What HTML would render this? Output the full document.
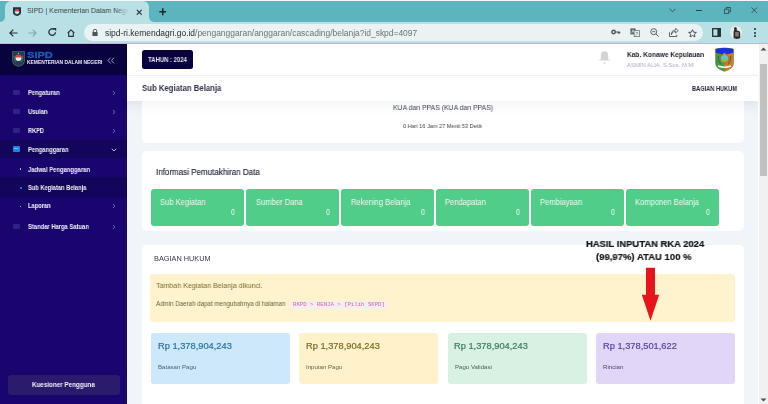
<!DOCTYPE html>
<html><head><meta charset="utf-8">
<style>
*{margin:0;padding:0;box-sizing:border-box}
html,body{width:768px;height:404px;overflow:hidden;background:#fff;font-family:"Liberation Sans",sans-serif}
.a{position:absolute}
.t{position:absolute;white-space:nowrap;line-height:1;transform-origin:0 0;will-change:transform}
.b{font-weight:bold}
.sb{font-weight:bold;font-size:6.56px;color:#f2f0fa;left:27.5px}
.ch{position:absolute;left:111.5px}
.ic{position:absolute;left:13.2px;width:7px;height:5.2px;background:#2e2386;border-radius:1px;filter:blur(0.6px)}
.g{position:absolute;top:189.3px;width:92.8px;height:36.4px;background:#50cd89;border-radius:3px}
.gl{font-size:8.38px;color:#effaf4;top:197.7px;transform:scaleX(0.905)}
.gz{font-size:8.4px;color:#effaf4;top:208.3px;transform:scaleX(0.85)}
.vc{position:absolute;top:333px;height:51.2px;border-radius:3px}
.rp{font-size:8.8px;top:342.1px;transform:scaleX(1.055);-webkit-text-stroke:0.2px currentColor}
.lb{font-size:6.1px;top:364.1px}
</style></head>
<body>
<!-- ============ BROWSER CHROME ============ -->
<div class="a" style="left:0;top:0;width:768px;height:1px;background:#f4f8f8"></div>
<div class="a" style="left:0;top:1px;width:768px;height:21px;background:#5cb5be"></div>
<!-- active tab -->
<div class="a" style="left:5px;top:1px;width:144px;height:22px;background:#b9e0e4;border-radius:6px 6px 0 0"></div>
<div class="a" style="left:0;top:14px;width:5px;height:8px;background:#b9e0e4"></div>
<div class="a" style="left:0;top:13px;width:5px;height:9px;background:#5cb5be;border-radius:0 0 5px 0"></div>
<div class="a" style="left:149px;top:14px;width:6px;height:8px;background:#b9e0e4"></div>
<div class="a" style="left:149px;top:13px;width:6px;height:9px;background:#5cb5be;border-radius:0 0 0 5px"></div>
<!-- tab icon -->
<svg class="a" style="left:13px;top:7px" width="8" height="9" viewBox="0 0 8 9">
 <path d="M0 0.3 H8 V5.5 Q8 8 4 9 Q0 8 0 5.5 Z" fill="#1a2f52"/>
 <circle cx="4" cy="4.6" r="2.3" fill="#f2efe6"/>
 <path d="M1.7 4.4 A2.3 2.3 0 0 1 6.3 4.4 Z" fill="#e43a2a"/>
 <path d="M1.5 6.6 Q4 8 6.5 6.6" stroke="#3a9a40" stroke-width="0.6" fill="none"/>
</svg>
<div class="t" style="left:27px;top:7.3px;font-size:8.1px;color:#33403f;width:118px;overflow:hidden;transform:scaleX(0.868);-webkit-mask-image:linear-gradient(90deg,#000 86%,transparent 99%)">SIPD <span style="color:#2a5fb0">|</span> Kementerian Dalam Negeri</div>
<svg class="a" style="left:136.3px;top:8.5px" width="6.5" height="6.5" viewBox="0 0 6.5 6.5"><path d="M0.8 0.8 L5.7 5.7 M5.7 0.8 L0.8 5.7" stroke="#243034" stroke-width="1.1"/></svg>
<svg class="a" style="left:158.5px;top:8px" width="7.5" height="7.5" viewBox="0 0 7.5 7.5"><path d="M3.75 0.3 V7.2 M0.3 3.75 H7.2" stroke="#1c282c" stroke-width="1.5"/></svg>
<!-- window controls -->
<svg class="a" style="left:669px;top:8px" width="7" height="5" viewBox="0 0 7 5"><path d="M0.6 0.8 L3.5 3.7 L6.4 0.8" stroke="#2a4448" stroke-width="0.8" fill="none"/></svg>
<div class="a" style="left:695.5px;top:9.5px;width:6.5px;height:0.8px;background:#2a4448"></div>
<svg class="a" style="left:724px;top:7px" width="7" height="7" viewBox="0 0 7 7"><path d="M0.5 2.2 H4.8 V6.5 H0.5 Z M2.2 2.2 V0.5 H6.5 V4.8 H4.8" stroke="#2a4448" stroke-width="0.8" fill="none"/></svg>
<svg class="a" style="left:751px;top:7px" width="6.5" height="6.5" viewBox="0 0 6.5 6.5"><path d="M0.5 0.5 L6 6 M6 0.5 L0.5 6" stroke="#2a4448" stroke-width="0.8"/></svg>
<!-- toolbar -->
<div class="a" style="left:0;top:22px;width:768px;height:21px;background:#b9e0e4"></div>
<div class="a" style="left:0;top:43px;width:768px;height:1px;background:#94cdd3"></div>
<!-- nav icons -->
<svg class="a" style="left:9px;top:28.5px" width="9" height="8" viewBox="0 0 9 8"><path d="M8.6 4 H1 M4.3 0.6 L0.9 4 L4.3 7.4" stroke="#263236" stroke-width="1.2" fill="none"/></svg>
<svg class="a" style="left:28px;top:28.5px" width="9" height="8" viewBox="0 0 9 8"><path d="M0.4 4 H8 M4.7 0.6 L8.1 4 L4.7 7.4" stroke="#82a6ab" stroke-width="1.1" fill="none"/></svg>
<svg class="a" style="left:47.5px;top:28.3px" width="9" height="8" viewBox="0 0 9 8"><path d="M7.5 4.3 A3.3 3.3 0 1 1 6.4 1.6" stroke="#263236" stroke-width="1.3" fill="none"/><path d="M5 0 H8.2 V3.2 Z" fill="#263236"/></svg>
<svg class="a" style="left:67.3px;top:28.5px" width="8" height="8" viewBox="0 0 8 8"><path d="M0.7 4 L4 0.9 L7.3 4 M1.7 3.2 V7.4 H6.3 V3.2" stroke="#263236" stroke-width="1.1" fill="none" stroke-linejoin="round"/></svg>
<!-- omnibox -->
<div class="a" style="left:84px;top:24px;width:619px;height:17px;background:#e9f3f4;border-radius:9px"></div>
<svg class="a" style="left:92px;top:29px" width="6" height="7" viewBox="0 0 6 7"><path d="M1.3 3 V2 A1.7 1.7 0 0 1 4.7 2 V3" stroke="#4a5558" stroke-width="0.9" fill="none"/><rect x="0.4" y="3" width="5.2" height="4" rx="0.6" fill="#4a5558"/></svg>
<div class="t" style="left:105px;top:28.6px;font-size:8.45px;color:#262e30">sipd-ri.kemendagri.go.id<span style="color:#6a7476">/penganggaran/anggaran/cascading/belanja?id_skpd=4097</span></div>
<!-- omnibox icons -->
<svg class="a" style="left:611px;top:29px" width="10" height="6" viewBox="0 0 10 6"><circle cx="2.6" cy="3" r="1.7" stroke="#4a5457" stroke-width="1.4" fill="none"/><path d="M4.4 3 H9 M7.3 3 V4.8 M8.6 3 V4.4" stroke="#4a5457" stroke-width="1.2"/></svg>
<svg class="a" style="left:630px;top:28px" width="10" height="9" viewBox="0 0 10 9"><rect x="0.4" y="0.4" width="5.2" height="6" fill="#5a6468"/><rect x="4.2" y="2.6" width="5.2" height="6" fill="#e9f3f4" stroke="#6a7478" stroke-width="0.8"/><path d="M5.6 4.6 H8.2 M6.9 3.9 V4.6 M5.9 7.6 L8 5" stroke="#6a7478" stroke-width="0.6"/><path d="M1.6 4.8 L3 1.8 L4.4 4.8 M2.2 3.8 H3.8" stroke="#e9f3f4" stroke-width="0.6" fill="none"/></svg>
<svg class="a" style="left:649.5px;top:28px" width="9" height="9" viewBox="0 0 9 9"><circle cx="3.7" cy="3.7" r="3" stroke="#4a5457" stroke-width="0.9" fill="none"/><path d="M5.9 5.9 L8.6 8.6 M2.2 3.7 H5.2" stroke="#4a5457" stroke-width="0.9"/></svg>
<svg class="a" style="left:668.5px;top:28px" width="10" height="9" viewBox="0 0 10 9"><path d="M0.5 4.3 V8.5 H7.8 V6.8" stroke="#4a5457" stroke-width="0.9" fill="none"/><path d="M2.4 6.8 Q2.6 3.3 6.6 3.3 V5 L9.3 2.6 L6.6 0.4 V2 Q2.2 2.2 2.4 6.8 Z" stroke="#4a5457" stroke-width="0.8" fill="none" stroke-linejoin="round"/></svg>
<svg class="a" style="left:688px;top:28.5px" width="9" height="9" viewBox="0 0 9 9"><path d="M4.5 0.7 L5.6 3.2 L8.4 3.4 L6.3 5.2 L7 7.9 L4.5 6.5 L2 7.9 L2.7 5.2 L0.6 3.4 L3.4 3.2 Z" stroke="#3a4448" stroke-width="0.9" fill="none" stroke-linejoin="round"/></svg>
<svg class="a" style="left:712px;top:28px" width="9" height="9" viewBox="0 0 9 9"><rect x="0.7" y="0.7" width="7.6" height="7.6" stroke="#263034" stroke-width="1.3" fill="none"/><rect x="5.4" y="0.7" width="2.9" height="7.6" fill="#263034"/></svg>
<div class="a" style="left:729.7px;top:26.2px;width:12.4px;height:12.4px;border-radius:50%;background:#e6eeec"></div>
<svg class="a" style="left:732.5px;top:26.5px" width="8" height="12" viewBox="0 0 8 12"><path d="M1 1 Q1.2 0 2.5 0.2 Q3.8 0.3 3.8 1.5 V3.4 L6 4 Q7.2 4.5 7.2 6 V10.8 Q7 11.8 4 11.9 Q1 11.8 0.6 11 V5 Q0.6 3.6 1.2 3.4 Z" fill="#2f2a28"/><rect x="2.2" y="5" width="3.6" height="4.5" fill="#7a7a78"/></svg>
<div class="a" style="left:754px;top:28px;width:2px;height:2px;background:#1f2b30;border-radius:1px"></div>
<div class="a" style="left:754px;top:31.5px;width:2px;height:2px;background:#1f2b30;border-radius:1px"></div>
<div class="a" style="left:754px;top:35px;width:2px;height:2px;background:#1f2b30;border-radius:1px"></div>

<!-- ============ SIDEBAR ============ -->
<div class="a" style="left:0;top:44px;width:127px;height:360px;background:#19056d"></div>
<div class="a" style="left:0;top:44px;width:127px;height:30.5px;background:#08033f"></div>
<!-- logo -->
<svg class="a" style="left:12px;top:50.8px" width="13" height="16" viewBox="0 0 13 16">
 <path d="M0.5 0.6 Q6.5 -0.2 12.5 0.6 V10.5 Q12.5 14 6.5 15.6 Q0.5 14 0.5 10.5 Z" fill="#1f3b5e" stroke="#6b6a40" stroke-width="0.7"/>
 <circle cx="6.5" cy="7" r="3" fill="#f3efe4"/>
 <path d="M3.5 6.6 A3 3 0 0 1 9.5 6.6 Z" fill="#e0402e"/>
 <path d="M2.2 4.5 Q1.8 9 4 11 M10.8 4.5 Q11.2 9 9 11" stroke="#3f8a50" stroke-width="0.8" fill="none"/>
 <circle cx="6.5" cy="2.4" r="0.7" fill="#d8c060"/>
</svg>
<div class="t b" style="left:26.9px;top:51px;font-size:9.08px;color:#1a5eb2;transform:scaleX(1.22);-webkit-text-stroke:0.3px #1a5eb2">SIPD</div>
<div class="t b" style="left:26.9px;top:60.8px;font-size:4.6px;color:#ececf6;transform:scaleX(1.07)">KEMENTERIAN DALAM NEGERI</div>
<svg class="a" style="left:106.5px;top:57px" width="8" height="7" viewBox="0 0 8 7"><path d="M3.6 0.6 L1 3.5 L3.6 6.4 M7 0.6 L4.4 3.5 L7 6.4" stroke="#b4b2d2" stroke-width="0.9" fill="none"/></svg>

<!-- menu rows -->
<div class="a" style="left:0;top:140.4px;width:127px;height:18px;background:#12055a"></div>
<div class="a" style="left:0;top:177px;width:127px;height:19.8px;background:#12055a"></div>

<div class="t sb" style="top:89.65px;transform:scaleX(0.881)">Pengaturan</div>
<div class="t sb" style="top:108.95px;transform:scaleX(0.89)">Usulan</div>
<div class="t sb" style="top:127.75px;transform:scaleX(0.86)">RKPD</div>
<div class="t sb" style="top:146.95px;transform:scaleX(0.893)">Penganggaran</div>
<div class="t sb" style="top:166.50px;transform:scaleX(0.896)">Jadwal Penganggaran</div>
<div class="t sb" style="top:184.60px;transform:scaleX(0.872)">Sub Kegiatan Belanja</div>
<div class="t sb" style="top:203.35px;transform:scaleX(0.877)">Laporan</div>
<div class="t sb" style="top:224.45px;transform:scaleX(0.89)">Standar Harga Satuan</div>
<!-- icons -->
<div class="ic" style="top:89.7px"></div>
<div class="ic" style="top:109px"></div>
<div class="ic" style="top:128px"></div>
<div class="a" style="left:12.8px;top:146.4px;width:7.7px;height:6px;background:#1f84e4;border-radius:1px"></div>
<div class="a" style="left:14px;top:148px;width:4px;height:0.8px;background:#7ab8f4"></div>
<div class="ic" style="top:224px"></div>
<div class="a" style="left:19.7px;top:167.9px;width:1.8px;height:1.8px;background:#d4d0ee;border-radius:50%"></div>
<div class="a" style="left:19.7px;top:186.5px;width:2px;height:2px;background:#2196f3;border-radius:50%"></div>
<div class="a" style="left:19.7px;top:205.5px;width:1.8px;height:1.8px;background:#d4d0ee;border-radius:50%"></div>
<!-- chevrons -->
<svg class="ch" style="top:89.5px" width="4" height="6" viewBox="0 0 4 6"><path d="M1 1 L2.8 3 L1 5" stroke="#8a84bc" stroke-width="0.75" fill="none"/></svg>
<svg class="ch" style="top:108.8px" width="4" height="6" viewBox="0 0 4 6"><path d="M1 1 L2.8 3 L1 5" stroke="#8a84bc" stroke-width="0.75" fill="none"/></svg>
<svg class="ch" style="top:127.6px" width="4" height="6" viewBox="0 0 4 6"><path d="M1 1 L2.8 3 L1 5" stroke="#8a84bc" stroke-width="0.75" fill="none"/></svg>
<svg class="a" style="left:110.8px;top:147.8px" width="6" height="4" viewBox="0 0 6 4"><path d="M0.7 0.7 L3 3 L5.3 0.7" stroke="#cdc9e6" stroke-width="0.9" fill="none"/></svg>
<svg class="ch" style="top:203px" width="4" height="6" viewBox="0 0 4 6"><path d="M1 1 L2.8 3 L1 5" stroke="#8a84bc" stroke-width="0.75" fill="none"/></svg>
<svg class="ch" style="top:224px" width="4" height="6" viewBox="0 0 4 6"><path d="M1 1 L2.8 3 L1 5" stroke="#8a84bc" stroke-width="0.75" fill="none"/></svg>
<!-- kuesioner -->
<div class="a" style="left:8.2px;top:375.1px;width:111.5px;height:20.4px;background:#2a1b6c;border-radius:3px"></div>
<div class="t b" style="left:32.2px;top:381.7px;font-size:6.84px;color:#f2f2fa;transform:scaleX(0.92)">Kuesioner Pengguna</div>

<!-- ============ MAIN ============ -->
<div class="a" style="left:127px;top:44px;width:631px;height:360px;background:#f1f4f8"></div>
<!-- header -->
<div class="a" style="left:127px;top:44px;width:631px;height:31.5px;background:#fff;border-bottom:1px solid #f1f2f5"></div>
<div class="a" style="left:142px;top:50px;width:51.3px;height:18.7px;background:#08033f;border-radius:2.5px"></div>
<div class="t b" style="left:148.4px;top:56.9px;font-size:6.7px;color:#e6e4ee;transform:scaleX(0.89)">TAHUN : 2024</div>
<svg class="a" style="left:596.5px;top:50.3px" width="15" height="15" viewBox="0 0 15 15"><path d="M7.5 1.2 Q3.8 1.2 3.8 5 V9.2 L1 10.6 H14 L11.2 9.2 V5 Q11.2 1.2 7.5 1.2 Z" fill="#d5d5d8"/><ellipse cx="7.5" cy="13.2" rx="1.5" ry="0.9" fill="#e2e2e4"/></svg>
<div class="t b" style="left:626.7px;top:50.8px;font-size:7.68px;color:#1e1e2d;transform:scaleX(0.862)">Kab. Konawe Kepulauan</div>
<div class="t" style="left:626.7px;top:61.6px;font-size:6.01px;color:#a8abbe;transform:scaleX(0.979)">ASMIN ALIA, S.Sos.,M.M</div>
<svg class="a" style="left:714.5px;top:46.5px" width="19" height="25" viewBox="0 0 19 25">
 <path d="M0.7 2 Q9.5 -0.2 18.3 2 V16.5 Q18.3 21.5 9.5 24.3 Q0.7 21.5 0.7 16.5 Z" fill="#3f9e45" stroke="#44602a" stroke-width="0.6"/>
 <path d="M9.5 7.5 L18.3 5.8 V16.5 Q18.3 21.5 9.5 24.3 Z" fill="#d9762a"/>
 <path d="M0.7 2 Q9.5 -0.2 18.3 2 V5.8 L9.5 7.8 L0.7 5.8 Z" fill="#1c2fe0"/>
 <circle cx="9.5" cy="11.6" r="4.6" fill="none" stroke="#b86a2c" stroke-width="1"/>
 <path d="M3.4 9 Q2.6 14 6 17.5 M15.6 9 Q16.4 14 13 17.5" stroke="#2a6a28" stroke-width="0.9" fill="none"/>
 <circle cx="9.5" cy="11.6" r="3.5" fill="#5cc0e8"/>
 <path d="M6.2 12.6 Q9.5 10.4 12.8 12.6 A3.5 3.5 0 0 1 6.2 12.6 Z" fill="#86c23a"/>
 <path d="M8.6 6.3 H10.4 V8.2 H8.6 Z" fill="#e0a040"/>
 <path d="M3 19 Q9.5 21.3 16 19" stroke="#f6f6f6" stroke-width="1.5" fill="none"/>
</svg>
<!-- subheader -->
<div class="a" style="left:127px;top:75.5px;width:631px;height:25.5px;background:#fff;box-shadow:0 3px 8px rgba(70,80,110,0.07)"></div>
<div class="t b" style="left:141.9px;top:83.8px;font-size:8.52px;color:#303246;transform:scaleX(0.911)">Sub Kegiatan Belanja</div>
<div class="t b" style="left:692px;top:86px;font-size:6.56px;color:#252838;transform:scaleX(0.867)">BAGIAN HUKUM</div>

<!-- card 1 -->
<div class="a" style="left:141.5px;top:101px;width:602px;height:41.8px;background:#fff;border-radius:0 0 5px 5px"></div>
<div class="a" style="left:127px;top:101px;width:631px;height:15px;background:linear-gradient(rgba(205,212,225,0.2),rgba(205,212,225,0.07) 50%,rgba(205,212,225,0))"></div>
<div class="t" style="left:392.8px;top:104px;font-size:7.68px;color:#3f4254;transform:scaleX(0.895)">KUA dan PPAS (KUA dan PPAS)</div>
<div class="t" style="left:403.3px;top:123.5px;font-size:5.8px;color:#3f4254;transform:scaleX(0.957)">0 Hari 16 Jam 27 Menit 53 Detik</div>

<!-- card 2 -->
<div class="a" style="left:141.5px;top:151px;width:602px;height:80.3px;background:#fff;border-radius:5px"></div>
<div class="t" style="left:155.9px;top:167.5px;font-size:8.66px;color:#25273a;transform:scaleX(0.926);-webkit-text-stroke:0.15px #25273a">Informasi Pemutakhiran Data</div>
<div class="g" style="left:151.3px"></div>
<div class="g" style="left:246.3px"></div>
<div class="g" style="left:341.2px"></div>
<div class="g" style="left:436.1px"></div>
<div class="g" style="left:531px"></div>
<div class="g" style="left:626px"></div>
<div class="t gl" style="left:160.4px">Sub Kegiatan</div>
<div class="t gl" style="left:255.5px">Sumber Dana</div>
<div class="t gl" style="left:350.5px">Rekening Belanja</div>
<div class="t gl" style="left:445.4px">Pendapatan</div>
<div class="t gl" style="left:540.3px">Pembiayaan</div>
<div class="t gl" style="left:635.3px">Komponen Belanja</div>
<div class="t gz" style="left:231px">0</div>
<div class="t gz" style="left:326px">0</div>
<div class="t gz" style="left:421px">0</div>
<div class="t gz" style="left:515.8px">0</div>
<div class="t gz" style="left:610.7px">0</div>
<div class="t gz" style="left:705.7px">0</div>

<!-- card 3 -->
<div class="a" style="left:141.5px;top:245.3px;width:602px;height:170px;background:#fff;border-radius:5px"></div>
<div class="t" style="left:154.2px;top:255.3px;font-size:7.33px;color:#383a4e;transform:scaleX(0.993)">BAGIAN HUKUM</div>
<div class="a" style="left:149.8px;top:273.5px;width:585px;height:48px;background:#fff3cd;border-radius:3px"></div>
<div class="t" style="left:156.4px;top:282.1px;font-size:7.82px;color:#7a6a32;transform:scaleX(0.906)">Tambah Kegiatan Belanja dikunci.</div>
<div class="t" style="left:156.4px;top:300.6px;font-size:6.6px;color:#6e6234;transform:scaleX(0.937)">Admin Daerah dapat mengubahnya di halaman</div>
<div class="a" style="left:291.2px;top:300.5px;width:96px;height:8.2px;background:#f5eef0;border-radius:2px"></div>
<div class="t" style="left:293px;top:302.3px;font-size:5.68px;color:#cf66ae;font-family:'Liberation Mono',monospace">RKPD &gt; RENJA &gt; [Pilih SKPD]</div>

<!-- value cards -->
<div class="vc" style="left:151px;width:139px;background:#cde8fb"></div>
<div class="vc" style="left:299px;width:139.4px;background:#fff2cb"></div>
<div class="vc" style="left:447.5px;width:139px;background:#d8f1e2"></div>
<div class="vc" style="left:595.9px;width:138.8px;background:#e2d6f8"></div>
<div class="t rp" style="left:157.8px;color:#2b72a6">Rp 1,378,904,243</div>
<div class="t rp" style="left:306px;color:#7d6a28">Rp 1,378,904,243</div>
<div class="t rp" style="left:454.3px;color:#3a7d5a">Rp 1,378,904,243</div>
<div class="t rp" style="left:602.5px;color:#5c42a0">Rp 1,378,501,622</div>
<div class="t lb" style="left:158px;color:#3f6480">Batasan Pagu</div>
<div class="t lb" style="left:306.2px;color:#6e5e38">Inputan Pagu</div>
<div class="t lb" style="left:454.5px;color:#3e6450">Pagu Validasi</div>
<div class="t lb" style="left:602.7px;color:#52407a">Rincian</div>

<!-- annotation -->
<div class="t b" style="left:585.5px;top:238.6px;font-size:9.78px;color:#161616;transform:scaleX(0.965);-webkit-text-stroke:0.2px #161616">HASIL INPUTAN RKA 2024</div>
<div class="t b" style="left:596.3px;top:252.4px;font-size:9.78px;color:#161616;transform:scaleX(0.975);-webkit-text-stroke:0.2px #161616">(99,97%) ATAU 100 %</div>
<svg class="a" style="left:641px;top:267px" width="19" height="55" viewBox="0 0 19 55">
 <path d="M5 0.8 H14 V27.7 H18.2 L9.5 53.7 L0.8 27.7 H5 Z" fill="#e8141c"/>
</svg>

<!-- scrollbar -->
<div class="a" style="left:758.5px;top:44px;width:9.5px;height:360px;background:#f1f1f1"></div>
<div class="a" style="left:759.5px;top:64px;width:7.5px;height:112px;background:#c1c1c1"></div>
<svg class="a" style="left:760px;top:47px" width="7" height="4" viewBox="0 0 7 4"><path d="M0.5 3.5 L3.5 0.5 L6.5 3.5 Z" fill="#505050"/></svg>
<svg class="a" style="left:760px;top:398px" width="7" height="4" viewBox="0 0 7 4"><path d="M0.5 0.5 L3.5 3.5 L6.5 0.5 Z" fill="#505050"/></svg>
</body></html>
